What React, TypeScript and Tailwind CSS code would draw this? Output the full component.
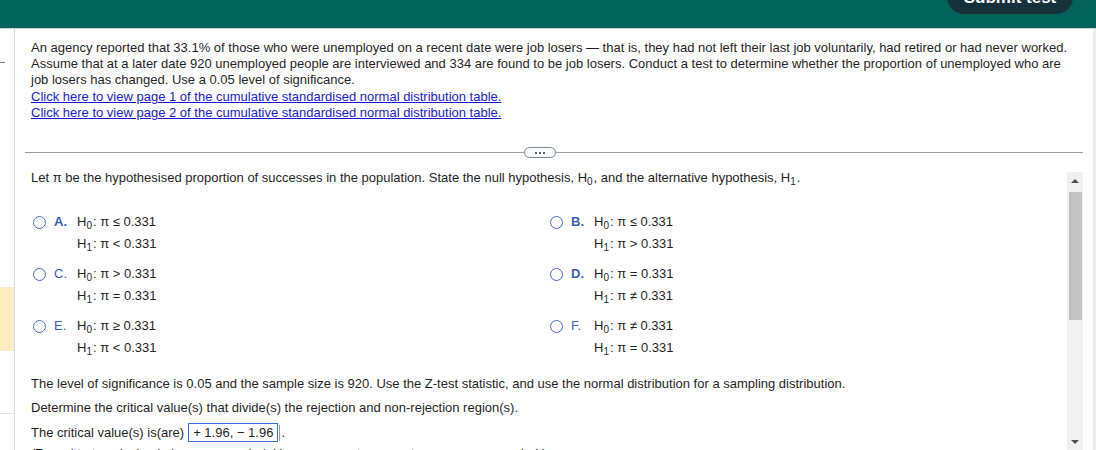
import React from "react";

const font = { fontFamily: '"Liberation Sans", Arial, sans-serif' };

function H({ n }: { n: string }) {
  return (
    <span>
      H<span className="relative top-[3px] mr-[1px] text-[10px]">{n}</span>
    </span>
  );
}

interface OptionProps {
  letter: string;
  bold?: boolean;
  h0: string;
  h1: string;
}

function Option({ letter, bold, h0, h1 }: OptionProps) {
  return (
    <div className="flex">
      <div className="mt-[2px] h-[13px] w-[13px] flex-shrink-0 rounded-full border-[1.5px] border-[#4a68c4]" />
      <span className={`ml-[8px] w-[23px] text-[#3c5cbf] ${bold ? "font-bold" : ""}`}>{letter}.</span>
      <div className="flex flex-col gap-[5px]">
        <span>
          <H n="0" />: π {h0} 0.331
        </span>
        <span>
          <H n="1" />: π {h1} 0.331
        </span>
      </div>
    </div>
  );
}

export default function App() {
  return (
    <div className="relative h-[450px] w-[1096px] overflow-hidden bg-white text-[13px] text-[#1f1f1f]" style={font}>
      {/* top bar */}
      <div className="flex h-[29px] justify-end border-b border-[#c9d6d4] bg-[#03635a] pr-[23px]">
        <div className="-mt-[20px] flex h-[34px] w-[126px] items-end justify-center rounded-full bg-[#17313a] pb-[8px] text-[17px] font-bold leading-none text-white">
          Submit test
        </div>
      </div>

      <div className="flex h-[421px]">
        {/* left rail */}
        <div className="flex w-[15px] flex-shrink-0 flex-col border-r border-[#d5dbe4]">
          <div className="ml-0 mt-[33px] h-[1px] w-[5px] bg-[#777]" />
          <div className="mt-[224px] h-[64px] w-[14px] bg-[#faedc3]" />
          <div className="mt-[62px] h-[1px] w-[14px] bg-[#e2e2e2]" />
        </div>

        {/* main */}
        <div className="flex min-w-0 flex-1 flex-col">
          <div className="pl-[16px] pr-[20px] pt-[11px] leading-[16px]">
            <p>
              An agency reported that 33.1% of those who were unemployed on a recent date were job losers — that is, they had not left their last job voluntarily, had retired or had never worked. Assume that at a later date 920 unemployed people are interviewed and 334 are found to be job losers. Conduct a test to determine whether the proportion of unemployed who are job losers has changed. Use a 0.05 level of significance.
            </p>
            <p className="mt-[1px]">
              <span className="text-[#1a1ad6] underline">Click here to view page 1 of the cumulative standardised normal distribution table.</span>
            </p>
            <p>
              <span className="text-[#1a1ad6] underline">Click here to view page 2 of the cumulative standardised normal distribution table.</span>
            </p>
          </div>

          {/* divider */}
          <div className="ml-[10px] mr-[10px] mt-[26px] flex items-center">
            <div className="h-[1px] flex-1 bg-[#9a9ca4]" />
            <div className="flex h-[11px] w-[32px] items-center justify-center gap-[2px] rounded-full border border-[#7d8792] bg-[#f8f9fb]">
              <span className="h-[2px] w-[2px] bg-[#566270]" />
              <span className="h-[2px] w-[2px] bg-[#566270]" />
              <span className="h-[2px] w-[2px] bg-[#566270]" />
            </div>
            <div className="h-[1px] w-[527px] bg-[#9a9ca4]" />
          </div>

          {/* scroll area */}
          <div className="mt-[12px] flex min-h-0 flex-1">
            <div className="flex-1 pl-[16px]">
              <p className="leading-[16px]">
                Let π be the hypothesised proportion of successes in the population. State the null hypothesis, <H n="0" />, and the alternative hypothesis, <H n="1" />.
              </p>

              <div className="ml-[2px] mt-[27px] grid grid-cols-[517px_1fr] gap-y-[13px] leading-[16px]">
                <Option letter="A" bold h0="≤" h1="<" />
                <Option letter="B" bold h0="≤" h1=">" />
                <Option letter="C" h0=">" h1="=" />
                <Option letter="D" bold h0="=" h1="≠" />
                <Option letter="E" h0="≥" h1="<" />
                <Option letter="F" h0="≠" h1="=" />
              </div>

              <div className="mt-[19px] flex flex-col gap-[8px] leading-[16px]">
                <p>The level of significance is 0.05 and the sample size is 920. Use the Z-test statistic, and use the normal distribution for a sampling distribution.</p>
                <p>Determine the critical value(s) that divide(s) the rejection and non-rejection region(s).</p>
                <p className="-mt-[1px] flex items-center">
                  The critical value(s) is(are)
                  <span className="ml-[4px] border border-[#3b6fd6] px-[4px] leading-[17px]">+ 1.96, − 1.96</span>
                  <span className="ml-[1px] border-l border-[#999] pl-[1px]">.</span>
                </p>
                <p className="-mt-[4px]">(Round to two decimal places as needed. Use a comma to separate answers as needed.)</p>
              </div>
            </div>

            {/* scrollbar */}
            <div className="mr-[10px] mt-[2px] flex w-[16px] flex-shrink-0 flex-col items-center bg-[#f1f1f1]">
              <div className="mt-[7px] h-0 w-0 border-x-[4px] border-b-[4px] border-x-transparent border-b-[#505050]" />
              <div className="mt-[9px] h-[128px] w-[13px] bg-[#c1c1c1]" />
              <div className="flex-1" />
              <div className="mb-[6px] h-0 w-0 border-x-[4px] border-t-[4px] border-x-transparent border-t-[#505050]" />
            </div>
          </div>
        </div>

        {/* right edge */}
        <div className="w-[3px] flex-shrink-0 bg-[#ececec]" />
      </div>
    </div>
  );
}
